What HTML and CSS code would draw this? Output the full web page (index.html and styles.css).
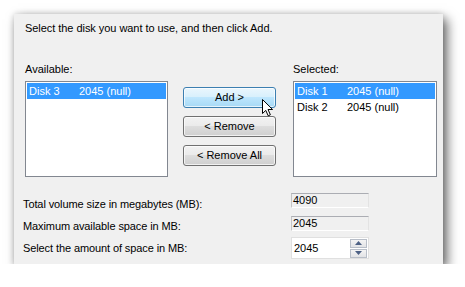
FILE: index.html
```html
<!DOCTYPE html>
<html>
<head>
<meta charset="utf-8">
<link rel="stylesheet" href="styles.css">
</head>
<body>
<div class="dialog">
  <p class="instr">Select the disk you want to use, and then click Add.</p>
  <div class="picker">
    <div class="col">
      <div class="label">Available:</div>
      <div class="listbox">
        <div class="item sel"><span class="name">Disk 3</span><span>2045 (null)</span></div>
      </div>
    </div>
    <div class="buttons">
      <div class="btn hover">Add &gt;</div>
      <div class="btn">&lt; Remove</div>
      <div class="btn">&lt; Remove All</div>
      <svg class="cursor" width="14" height="20" viewBox="0 0 14 20"><path d="M1.5 1.5 V15.5 L4.8 12.4 L7.2 17.8 L9.4 16.8 L7 11.5 H11.6 Z" fill="#fff" stroke="#000" stroke-width="1" stroke-linejoin="miter"/></svg>
    </div>
    <div class="col">
      <div class="label">Selected:</div>
      <div class="listbox wide">
        <div class="item sel"><span class="name">Disk 1</span><span>2045 (null)</span></div>
        <div class="item"><span class="name">Disk 2</span><span>2045 (null)</span></div>
      </div>
    </div>
  </div>
  <div class="form">
    <div class="flabel">Total volume size in megabytes (MB):</div>
    <div class="field ro">4090</div>
    <div class="flabel">Maximum available space in MB:</div>
    <div class="field ro">2045</div>
    <div class="flabel">Select the amount of space in MB:</div>
    <div class="spin">
      <span class="val">2045</span>
      <div class="arrows">
        <div class="arr"><svg width="7" height="4" viewBox="0 0 7 4"><path d="M0 4 L3.5 0 L7 4 Z" fill="#4d6185"/></svg></div>
        <div class="arr"><svg width="7" height="4" viewBox="0 0 7 4"><path d="M0 0 L3.5 4 L7 0 Z" fill="#4d6185"/></svg></div>
      </div>
    </div>
  </div>
</div>
</body>
</html>
```
FILE: styles.css
```css
* { box-sizing: border-box; }
body {
  margin: 0;
  background: #fff;
  font-family: "Liberation Sans", Arial, sans-serif;
  font-size: 11px;
  color: #000;
}
.dialog {
  margin: 14px 0 0 14px;
  width: 429px;
  height: 250px;
  background: #f0f0f0;
  box-shadow: 4px 5px 11px rgba(0,0,0,0.6), 0 0 6px rgba(0,0,0,0.15);
  padding: 8px 0 0 11px;
}
.instr {
  margin: 0;
  line-height: 13px;
  height: 13px;
  letter-spacing: -0.05px;
}
.picker {
  display: flex;
  margin-top: 28px;
}
.label {
  line-height: 13px;
  height: 13px;
  margin-bottom: 5px;
}
.listbox {
  width: 143px;
  height: 96px;
  background: #fff;
  border: 1px solid #828790;
  padding: 1px;
}
.listbox.wide { width: 144px; }
.item {
  height: 16px;
  line-height: 16px;
  padding-left: 2px;
  display: flex;
  white-space: nowrap;
}
.item .name { width: 50px; }
.item.sel { background: #3399ff; color: #fff; }
.buttons {
  position: relative;
  width: 125px;
  padding: 24px 0 0 15px;
  display: flex;
  flex-direction: column;
  gap: 8px;
}
.btn {
  width: 93px;
  height: 21px;
  line-height: 19px;
  text-align: center;
  border: 1px solid #707070;
  border-radius: 3px;
  background: linear-gradient(#f2f2f2 0%, #ebebeb 45%, #dddddd 50%, #cfcfcf 100%);
  box-shadow: inset 0 0 0 1px rgba(255,255,255,0.7);
}
.btn.hover {
  border-color: #3c7fb1;
  background: linear-gradient(#eaf6fd 0%, #d9f0fc 45%, #bee6fd 50%, #a7d9f5 100%);
}
.cursor {
  position: absolute;
  left: 93px;
  top: 35px;
}
.form {
  display: grid;
  grid-template-columns: 268px 78px;
  margin-top: 16px;
  margin-left: -2px;
  align-items: center;
}
.flabel { line-height: 13px; letter-spacing: -0.1px; }
.field {
  height: 15px;
  line-height: 13px;
  padding-left: 1px;
}
.ro {
  border-top: 1px solid #abadb3;
  border-left: 1px solid #c4c4c4;
  border-right: 1px solid #e3e3e3;
  border-bottom: 1px solid #fff;
  background: #f0f0f0;
}
.form .field:nth-of-type(2) { margin-bottom: 8px; }
.form .field:nth-of-type(4) { margin-bottom: 6px; }
.spin {
  height: 22px;
  background: #fff;
  border: 1px solid #e0e0e0;
  display: flex;
  align-items: center;
  justify-content: space-between;
  padding-left: 2px;
}
.arrows {
  display: flex;
  flex-direction: column;
  gap: 1px;
  padding: 1px 1px 1px 0;
}
.arr {
  width: 17px;
  height: 9px;
  border: 1px solid #b8bec8;
  background: linear-gradient(#f4f4f4, #e2e3e6);
  display: flex;
  align-items: center;
  justify-content: center;
}
```
